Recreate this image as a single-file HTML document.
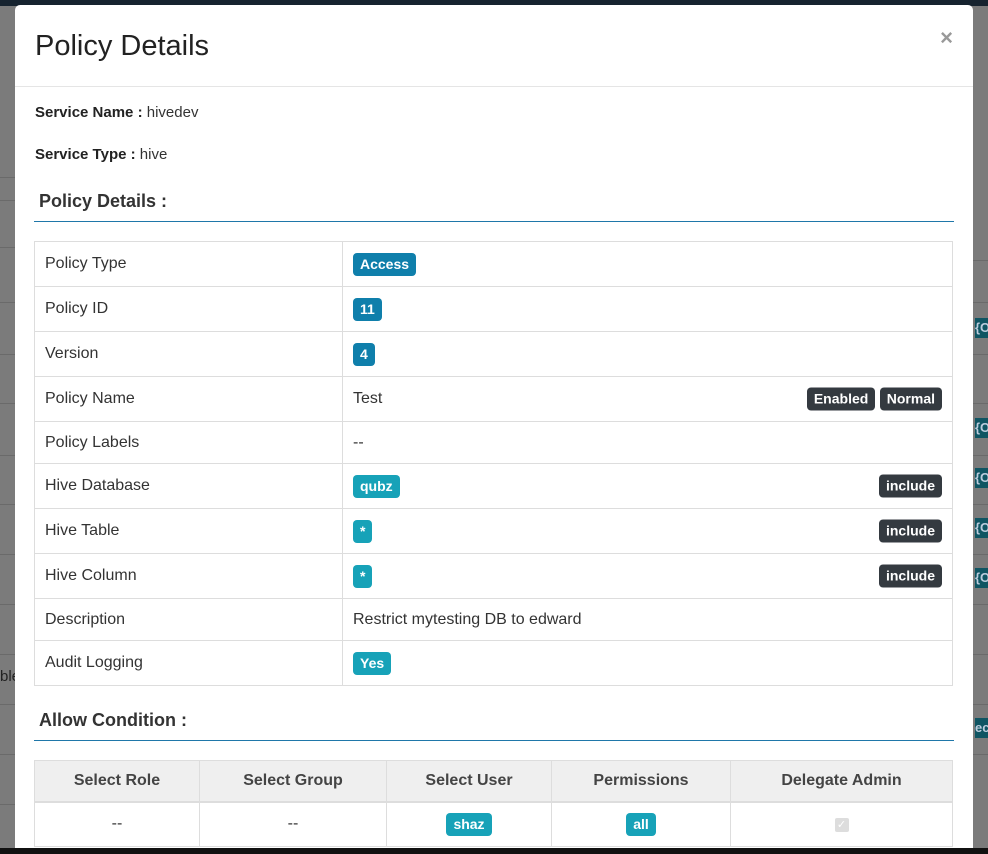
<!DOCTYPE html>
<html><head><style>
*{box-sizing:border-box;margin:0;padding:0}
html,body{width:988px;height:854px;overflow:hidden}
body{background:#7b7b7b;font-family:"Liberation Sans",Arial,sans-serif;position:relative;color:#333}
.topbar{position:absolute;left:0;top:0;width:988px;height:6px;background:#16232f}
.botbar{position:absolute;left:0;top:848px;width:988px;height:6px;background:#111}
.bgl{position:absolute;left:0;width:15px;height:1px;background:#6a6a6a}
.bgr{position:absolute;left:973px;width:15px;height:1px;background:#6a6a6a}
.tag{position:absolute;left:975px;width:13px;height:20px;background:#0f5563;color:#bcd;font-size:13px;font-weight:bold;line-height:20px;overflow:hidden}
.modal{position:absolute;left:15px;top:5px;width:958px;height:843px;background:#fff;border-radius:5px 5px 0 0;overflow:hidden}
.hdr{height:82px;border-bottom:1px solid #e5e5e5;position:relative}
.hdr h1{position:absolute;left:20px;top:25px;font-size:29px;font-weight:normal;color:#222}
.x{position:absolute;right:20px;top:20px;font-size:22px;font-weight:bold;color:#999}
.info{position:absolute;left:20px;font-size:15px;color:#333}
.info b{color:#222}
.sec{position:absolute;left:19px;width:920px;border-bottom:1px solid #1f77a9;font-size:18px;font-weight:bold;color:#333;padding-left:5px}
table{border-collapse:collapse;position:absolute;left:19px;width:919px;font-size:16px}
td{border:1px solid #ddd;padding:0 10px;vertical-align:middle;position:relative}
.b{display:inline-block;color:#fff;font-weight:bold;font-size:14px;padding:0 7px;height:23px;line-height:23px;border-radius:4px}
.blu{background:#0f7fab}.tea{background:#17a2b8}.dk{background:#343a40}
.r{position:absolute;right:10px;top:50%;transform:translateY(-50%)}
.t2 th{background:#efefef;border:1px solid #ddd;border-bottom:2px solid #ddd;font-size:16px;font-weight:bold;color:#444;height:41px}
.t2 td{text-align:center;height:45px}
</style></head><body>
<div class="topbar"></div>
<div class="bgl" style="top:177px"></div><div class="bgl" style="top:200px"></div><div class="bgl" style="top:247px"></div><div class="bgl" style="top:302px"></div><div class="bgl" style="top:354px"></div><div class="bgl" style="top:403px"></div><div class="bgl" style="top:455px"></div><div class="bgl" style="top:504px"></div><div class="bgl" style="top:554px"></div><div class="bgl" style="top:604px"></div><div class="bgl" style="top:654px"></div><div class="bgl" style="top:704px"></div><div class="bgl" style="top:754px"></div><div class="bgl" style="top:804px"></div>
<div style="position:absolute;left:0;top:668px;font-size:15px;color:#222">ble</div>
<div class="bgr" style="top:260px"></div><div class="bgr" style="top:302px"></div><div class="bgr" style="top:354px"></div><div class="bgr" style="top:403px"></div><div class="bgr" style="top:455px"></div><div class="bgr" style="top:504px"></div><div class="bgr" style="top:554px"></div><div class="bgr" style="top:604px"></div><div class="bgr" style="top:654px"></div><div class="bgr" style="top:704px"></div><div class="bgr" style="top:754px"></div>
<div class="tag" style="top:318px">{O</div><div class="tag" style="top:418px">{O</div><div class="tag" style="top:468px">{O</div><div class="tag" style="top:518px">{O</div><div class="tag" style="top:568px">{O</div><div class="tag" style="top:718px">ec</div>
<div class="botbar"></div>
<div class="modal">
<div class="hdr"><h1>Policy Details</h1><div class="x">×</div></div>
<div class="info" style="top:99px"><b>Service Name :</b> hivedev</div>
<div class="info" style="top:141px"><b>Service Type :</b> hive</div>
<div class="sec" style="top:186px;height:31px">Policy Details :</div>
<table style="top:236px">
<tr style="height:45px"><td style="width:308px">Policy Type</td><td><span class="b blu">Access</span></td></tr>
<tr style="height:45px"><td>Policy ID</td><td><span class="b blu">11</span></td></tr>
<tr style="height:45px"><td>Version</td><td><span class="b blu">4</span></td></tr>
<tr style="height:45px"><td>Policy Name</td><td>Test<span class="r"><span class="b dk">Enabled</span> <span class="b dk">Normal</span></span></td></tr>
<tr style="height:42px"><td>Policy Labels</td><td>--</td></tr>
<tr style="height:45px"><td>Hive Database</td><td><span class="b tea">qubz</span><span class="r"><span class="b dk">include</span></span></td></tr>
<tr style="height:45px"><td>Hive Table</td><td><span class="b tea">*</span><span class="r"><span class="b dk">include</span></span></td></tr>
<tr style="height:45px"><td>Hive Column</td><td><span class="b tea">*</span><span class="r"><span class="b dk">include</span></span></td></tr>
<tr style="height:42px"><td>Description</td><td>Restrict mytesting DB to edward</td></tr>
<tr style="height:45px"><td>Audit Logging</td><td><span class="b tea">Yes</span></td></tr>
</table>
<div class="sec" style="top:705px;height:31px">Allow Condition :</div>
<table class="t2" style="top:755px">
<tr><th style="width:165px">Select Role</th><th style="width:187px">Select Group</th><th style="width:165px">Select User</th><th style="width:179px">Permissions</th><th>Delegate Admin</th></tr>
<tr><td>--</td><td>--</td><td><span class="b tea">shaz</span></td><td><span class="b tea">all</span></td><td><span style="display:inline-block;width:14px;height:14px;background:#ddd;border-radius:2px;color:#fff;font-size:11px;line-height:14px">✓</span></td></tr>
</table>
</div>
</body></html>
